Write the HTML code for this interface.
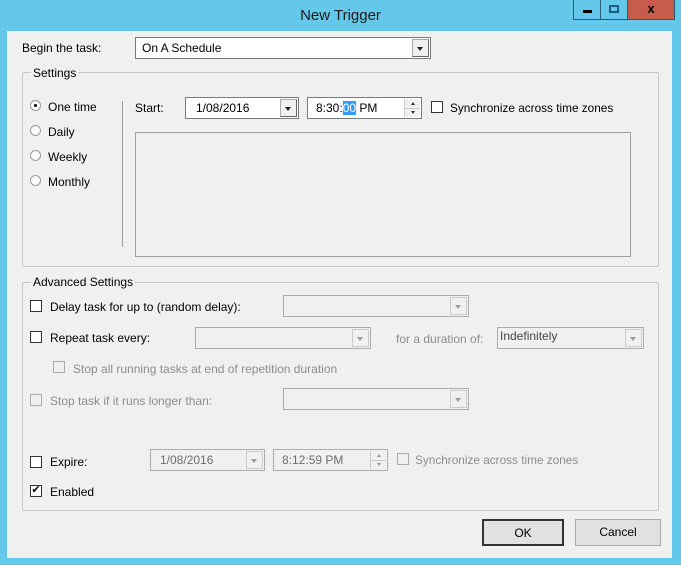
<!DOCTYPE html>
<html><head><style>
*{margin:0;padding:0;box-sizing:border-box}
body{width:681px;height:565px;background:#63c8e9;position:relative;overflow:hidden;font-family:"Liberation Sans",sans-serif;font-size:12px;color:#000}
.a{position:absolute;white-space:nowrap}
.client{position:absolute;left:7px;top:31px;width:665px;height:527px;background:#f0f0f0}
.grp{position:absolute;border:1px solid #c8c8c8;border-radius:2px}
.lbl{position:absolute;background:#f0f0f0;padding:0 2px;line-height:14px}
.cb{position:absolute;width:12px;height:12px;border:1px solid #333;background:#fff}
.cb.g{border-color:#aaa;background:#f0f0f0}
.rd{position:absolute;width:11px;height:11px;border-radius:50%;border:1px solid #999;background:#fff}
.combo{position:absolute;border:1px solid #7a7a7a;background:#fff;height:22px;line-height:20px;padding-left:6px}
.combo.d{border-color:#adadad;background:#f0f0f0;color:#6d6d6d}
.arr{position:absolute;right:1px;top:1px;width:17px;height:18px;border:1px solid #aaa;border-right-color:#666;border-bottom-color:#666;background:#f0f0f0}
.arr:after{content:"";position:absolute;left:4px;top:7px;border-left:3.5px solid transparent;border-right:3.5px solid transparent;border-top:4px solid #222}
.combo.d .arr{border-color:#ccc}
.combo.d .arr:after{border-top-color:#999}
.g{color:#8d8d8d}
.btn{position:absolute;background:#e1e1e1;border:1px solid #adadad;text-align:center;line-height:24px}
.spin{position:absolute;right:1px;top:1px;width:16px;height:18px;border-left:1px solid #ccc;background:#f0f0f0}
.spin:before{content:"";position:absolute;left:0;right:0;top:9px;border-top:1px solid #ccc}
.spin i{position:absolute;left:6px;border-left:2px solid transparent;border-right:2px solid transparent}
</style></head><body>
<div class="a" style="left:0;width:681px;text-align:center;top:7px;font-size:15px;color:#1b1b1b">New Trigger</div>
<div class="a" style="left:573px;top:0;width:28px;height:20px;border:1px solid #2b5a74;border-top:none;background:#63c8e9"><div class="a" style="left:9px;top:10px;width:9px;height:3px;background:#000"></div></div>
<div class="a" style="left:601px;top:0;width:27px;height:20px;border:1px solid #2b5a74;border-top:none;border-left:none;background:#63c8e9"><div class="a" style="left:8px;top:5px;width:10px;height:8px;border:2px solid #1d5d80"></div></div>
<div class="a" style="left:628px;top:0;width:47px;height:20px;border:1px solid #2b5a74;border-top:none;border-left:none;background:#c75c4e;text-align:center;font-weight:bold;font-size:13px;line-height:18px">x</div>
<div class="client"></div>
<div class="a" style="left:22px;top:41px">Begin the task:</div>
<div class="combo" style="left:135px;top:37px;width:296px">On A Schedule<div class="arr"></div></div>

<div class="grp" style="left:22px;top:72px;width:637px;height:195px"></div>
<div class="lbl" style="left:31px;top:66px">Settings</div>
<div class="rd" style="left:30px;top:100px"><div class="a" style="left:3px;top:3px;width:3px;height:3px;background:#000;border-radius:50%"></div></div>
<div class="a" style="left:48px;top:100px">One time</div>
<div class="rd" style="left:30px;top:125px"></div><div class="a" style="left:48px;top:125px">Daily</div>
<div class="rd" style="left:30px;top:150px"></div><div class="a" style="left:48px;top:150px">Weekly</div>
<div class="rd" style="left:30px;top:175px"></div><div class="a" style="left:48px;top:175px">Monthly</div>
<div class="a" style="left:122px;top:101px;width:1px;height:146px;background:#a0a0a0"></div>
<div class="a" style="left:135px;top:101px">Start:</div>
<div class="combo" style="left:185px;top:97px;width:114px;padding-left:10px">1/08/2016<div class="arr"></div></div>
<div class="combo" style="left:307px;top:97px;width:115px;padding-left:8px">8:30:<span style="background:#3399ff;color:#fff">00</span> PM<div class="spin"><i style="top:3px;border-bottom:3px solid #333"></i><i style="top:12px;border-top:3px solid #333"></i></div></div>
<div class="cb" style="left:431px;top:101px"></div>
<div class="a" style="left:450px;top:101px;font-size:11.8px">Synchronize across time zones</div>
<div class="a" style="left:135px;top:132px;width:496px;height:125px;border:1px solid #a0a0a0"></div>

<div class="grp" style="left:22px;top:282px;width:637px;height:229px"></div>
<div class="lbl" style="left:31px;top:275px">Advanced Settings</div>
<div class="cb" style="left:30px;top:300px"></div><div class="a" style="left:50px;top:300px">Delay task for up to (random delay):</div>
<div class="combo d" style="left:283px;top:295px;width:186px"><div class="arr"></div></div>
<div class="cb" style="left:30px;top:331px"></div><div class="a" style="left:50px;top:331px">Repeat task every:</div>
<div class="combo d" style="left:195px;top:327px;width:176px"><div class="arr"></div></div>
<div class="a g" style="left:396px;top:332px">for a duration of:</div>
<div class="combo d" style="left:497px;top:327px;width:147px;padding-left:2px;line-height:17px;color:#444">Indefinitely<div class="arr"></div></div>
<div class="cb g" style="left:53px;top:361px"></div><div class="a g" style="left:73px;top:362px">Stop all running tasks at end of repetition duration</div>
<div class="cb g" style="left:30px;top:394px"></div><div class="a g" style="left:50px;top:394px">Stop task if it runs longer than:</div>
<div class="combo d" style="left:283px;top:388px;width:186px"><div class="arr"></div></div>
<div class="cb" style="left:30px;top:456px"></div><div class="a" style="left:50px;top:455px">Expire:</div>
<div class="combo d" style="left:150px;top:449px;width:115px;padding-left:9px">1/08/2016<div class="arr"></div></div>
<div class="combo d" style="left:273px;top:449px;width:115px;padding-left:8px">8:12:59 PM<div class="spin"><i style="top:3px;border-bottom:3px solid #999"></i><i style="top:12px;border-top:3px solid #999"></i></div></div>
<div class="cb g" style="left:397px;top:453px"></div><div class="a g" style="left:415px;top:453px;font-size:11.8px">Synchronize across time zones</div>
<div class="cb" style="left:30px;top:485px;font-size:11px;line-height:9px;text-align:center">✔</div><div class="a" style="left:50px;top:485px">Enabled</div>

<div class="btn" style="left:482px;top:519px;width:82px;height:27px;border:2px solid #333">OK</div>
<div class="btn" style="left:575px;top:519px;width:86px;height:27px">Cancel</div>
</body></html>
